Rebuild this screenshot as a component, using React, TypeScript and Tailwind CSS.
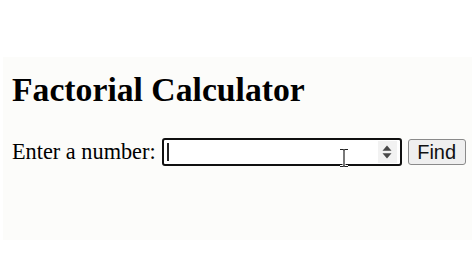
import React from 'react';

export default function App() {
  return (
    <div className="w-[474px] h-[266px] bg-white pt-[57px] pl-[3px]">
      <div className="relative w-[469px] h-[183px] bg-[#fcfcfa] pl-[9px] pt-[14px] font-['Liberation_Serif',serif] text-black">
        <h2 className="text-[33.7px] leading-[38px] font-bold">Factorial Calculator</h2>

        <div className="mt-[29px] flex items-center text-[22.3px] leading-[28px]">
          <span>Enter a number:</span>
          <div className="ml-[6px] relative flex items-center w-[240px] h-[28px] border-2 border-[#101010] rounded-[3px] bg-white">
            {/* text caret */}
            <div className="ml-[3px] w-[2px] h-[18px] bg-[#222]" />
            {/* spinner */}
            <div className="ml-auto mr-[3px] w-[19px] h-[22px] bg-[#f2f2f2] flex items-center justify-center">
              <svg width="10" height="16" viewBox="0 0 10 16">
                <path d="M0.5 6.8 L5 1.5 L9.5 6.8 Z" fill="#484848" />
                <path d="M0.5 9.2 L5 14.5 L9.5 9.2 Z" fill="#484848" />
              </svg>
            </div>
          </div>
          <button className="ml-[6px] w-[58px] h-[26px] border border-[#8a8a8a] rounded-[3px] bg-[#efefef] font-['Liberation_Sans',sans-serif] text-[20px] leading-[24px] text-[#111]">
            Find
          </button>
        </div>

        {/* mouse I-beam cursor */}
        <svg className="absolute left-[334px] top-[91px]" width="14" height="20" viewBox="0 0 14 20">
          <path d="M3 1.5 H6 Q7 1.5 7 3 V17 Q7 18.5 6 18.5 H3 M11 1.5 H8 Q7 1.5 7 3 V17 Q7 18.5 8 18.5 H11" fill="none" stroke="#fff" strokeWidth="3" />
          <path d="M3 1.5 H6 Q7 1.5 7 3 V17 Q7 18.5 6 18.5 H3 M11 1.5 H8 Q7 1.5 7 3 V17 Q7 18.5 8 18.5 H11" fill="none" stroke="#222" strokeWidth="1.2" />
        </svg>
      </div>
    </div>
  );
}
